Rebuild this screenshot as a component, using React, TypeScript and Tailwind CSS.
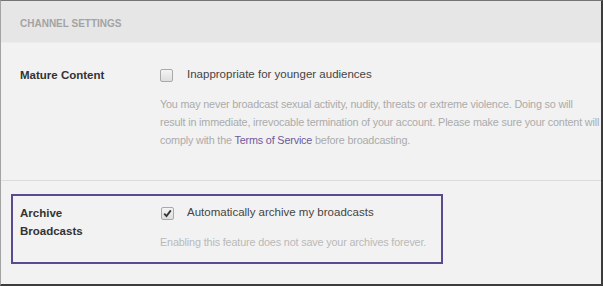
import React from 'react'

const Checkbox = ({ checked }: { checked?: boolean }) => (
    <span className="flex h-[13px] w-[13px] shrink-0 items-center justify-center rounded-[2px] border border-[#a9a9a9] bg-gradient-to-b from-[#f4f4f4] to-[#dedede]">
        {checked && (
            <svg width="9" height="9" viewBox="0 0 9 9">
                <path d="M1.2 4.6 L3.5 7 L7.8 1.4" fill="none" stroke="#333" strokeWidth="1.8" />
            </svg>
        )}
    </span>
)

const App = () => {
    return (
        <div
            className="flex h-[286px] w-[603px] flex-col border-t border-l border-r-2 border-b-2 border-t-[#747474] border-l-[#a3a3a3] border-r-[#3c3c3c] border-b-[#3c3c3c] bg-[#f2f2f2] text-[11.5px]"
            style={{ fontFamily: '"Liberation Sans", Arial, sans-serif' }}
        >
            {/* Header */}
            <div className="flex h-[42px] shrink-0 items-center border-b border-[#ececec] bg-[#e6e6e6] pt-[3px] pl-[19px]">
                <h2 className="text-[10px] font-bold uppercase text-[#a3a3a3]">Channel Settings</h2>
            </div>

            {/* Mature Content */}
            <div className="flex border-b border-[#dcdcdc] pt-[23px] pb-[31px] pl-[19px]">
                <div className="w-[140px] shrink-0 leading-[18px] font-bold text-[#333]">Mature Content</div>
                <div className="w-[440px]">
                    <label className="flex h-[18px] items-center">
                        <Checkbox />
                        <span className="ml-[14px] text-[#444]">Inappropriate for younger audiences</span>
                    </label>
                    <p className="mt-[11px] whitespace-nowrap text-[10.8px] leading-[18px] tracking-[-0.17px] text-[#ababab]">
                        <span className="block">You may never broadcast sexual activity, nudity, threats or extreme violence. Doing so will</span>
                        <span className="block">result in immediate, irrevocable termination of your account. Please make sure your content will</span>
                        <span className="block">
                            comply with the <a className="text-[#6c5a9c]">Terms of Service</a> before broadcasting.
                        </span>
                    </p>
                </div>
            </div>

            {/* Archive Broadcasts */}
            <div className="mt-[13px] ml-[10px] flex w-[432px] border-2 border-[#5b4a8f] pt-[8px] pb-[11px] pl-[7px]">
                <div className="w-[100px] shrink-0 leading-[18px] font-bold text-[#333]">Archive Broadcasts</div>
                <div className="ml-[40px]">
                    <label className="flex h-[18px] items-center">
                        <span className="ml-[1px]"><Checkbox checked /></span>
                        <span className="ml-[13px] text-[#444]">Automatically archive my broadcasts</span>
                    </label>
                    <p className="mt-[11px] text-[10.8px] leading-[18px] tracking-[-0.15px] text-[#b9b9b9]">
                        Enabling this feature does not save your archives forever.
                    </p>
                </div>
            </div>
        </div>
    )
}

export default App
